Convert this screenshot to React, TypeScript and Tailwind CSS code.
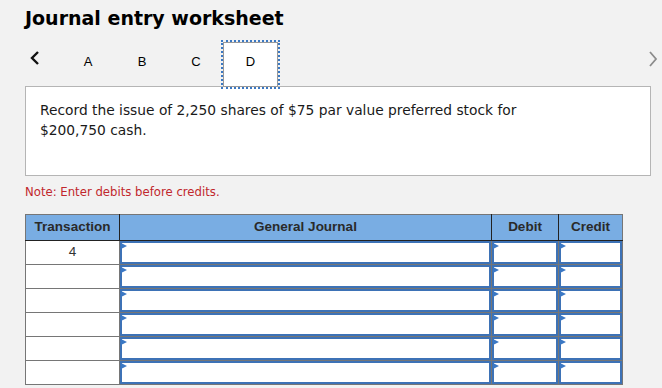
import React from 'react';

const tabs = ['A', 'B', 'C', 'D'];
const rows = ['4', '', '', '', '', ''];

const Marker = () => (
  <span className="absolute left-[-1px] top-[0px] w-0 h-0 border-y-[3px] border-y-transparent border-l-[6px] border-l-[#3b78c4]" />
);

const EntryCell = ({ w }: { w: string }) => (
  <td className={`${w} p-0 border border-[#767676] h-[24px]`}>
    <div className="relative h-[23px] border-2 border-[#3d72b6] bg-white">
      <Marker />
    </div>
  </td>
);

export default function App() {
  return (
    <div className="w-[662px] h-[388px] overflow-hidden bg-[#f2f2f2] font-['DejaVu_Sans',sans-serif] text-black">
      <h1 className="pl-[25px] pt-[7px] text-[19px] leading-[22px] font-bold">Journal entry worksheet</h1>

      <div className="relative flex items-start h-[57px] pt-[13px] pl-[25px]">
        <svg width="14" height="16" viewBox="0 0 14 16" className="mt-[8px] ml-[3px]">
          <path d="M10 2 L4 8 L10 14" fill="none" stroke="#111" strokeWidth="2.4" />
        </svg>
        <div className="flex ml-[19px] font-['Liberation_Sans',sans-serif] text-[13px]">
          {tabs.map((t) => (
            <div
              key={t}
              className={
                t === 'D'
                  ? 'relative z-10 w-[55px] h-[45px] bg-white border border-[#9a9a9a] outline-2 outline-dotted outline-[#3a78c3] text-center pt-[9px]'
                  : 'w-[54px] text-center pt-[10px]'
              }
            >
              {t}
            </div>
          ))}
        </div>
        <svg width="10" height="18" viewBox="0 0 10 18" className="absolute right-[4px] top-[21px]">
          <path d="M2 2 L8 9 L2 16" fill="none" stroke="#8c8c8c" strokeWidth="1.8" />
        </svg>
      </div>

      <div className="ml-[25px] w-[626px] h-[90px] bg-white border border-[#b5b5b5] px-[14px] pt-[14px] text-[13.8px] leading-[19.5px] text-[#1a1a1a]">
        Record the issue of 2,250 shares of $75 par value preferred stock for
        <br />
        $200,750 cash.
      </div>

      <p className="pl-[25px] mt-[9px] text-[11.7px] leading-[14px] text-[#c1272d]">Note: Enter debits before credits.</p>

      <table className="ml-[25px] mt-[15px] border-collapse border border-[#767676] bg-white font-['Liberation_Sans',sans-serif] text-[13.5px] text-[#2a2a2a]">
        <thead>
          <tr className="bg-[#79ade3] h-[26px]">
            <th className="w-[94px] p-0 font-bold border-r border-r-[#222] border-b border-b-[#222]">Transaction</th>
            <th className="w-[372px] p-0 font-bold border-r border-r-[#222] border-b border-b-[#222]">General Journal</th>
            <th className="w-[67px] p-0 font-bold border-r border-r-[#222] border-b border-b-[#222]">Debit</th>
            <th className="w-[64px] p-0 font-bold border-b border-b-[#222]">Credit</th>
          </tr>
        </thead>
        <tbody>
          {rows.map((r, i) => (
            <tr key={i}>
              <td className="w-[94px] h-[24px] p-0 border border-[#767676] text-center text-[#333]">{r}</td>
              <EntryCell w="w-[372px]" />
              <EntryCell w="w-[67px]" />
              <EntryCell w="w-[64px]" />
            </tr>
          ))}
        </tbody>
      </table>
    </div>
  );
}
